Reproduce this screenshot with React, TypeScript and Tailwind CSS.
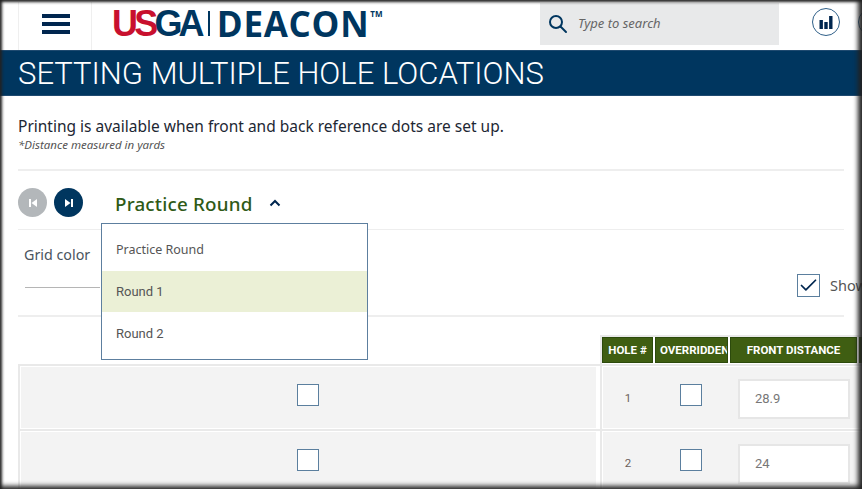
import React from 'react';
import { Check } from 'lucide-react';

const plex = "font-['Noto_Sans',sans-serif]";
const roboto = "font-['Roboto',sans-serif]";
const headCell = `flex shrink-0 items-center border border-[#2c4a0c] bg-[#3f5e12] pt-[2px] text-[11.5px] font-bold text-white ${roboto}`;

function HoleRow({ hole, value }: { hole: number; value: string }) {
  return (
    <div className="flex h-[65px] shrink-0 border-t-2 border-l-2 border-[#e9e9e9] bg-white">
      <div className="flex w-[577px] shrink-0 items-start justify-center border border-white bg-[#f3f3f3] pr-px pt-[17px]">
        <div className="h-[22px] w-[22px] border border-[#5b7f9e] bg-white" />
      </div>
      <div className="ml-[3px] flex flex-1 border-l-2 border-[#e9e9e9]">
        <div className="flex flex-1 border border-white bg-[#f3f3f3]">
          <div className={`w-[50px] shrink-0 pt-[23px] text-center text-[11.5px] text-[#6b5f5a] ${roboto}`}>{hole}</div>
          <div className="flex w-[75px] shrink-0 justify-center pt-[17px]">
            <div className="h-[22px] w-[22px] border border-[#5b7f9e] bg-white" />
          </div>
          <div className="pl-[10px] pt-[12px]">
            <div className={`flex h-[40px] w-[112px] items-center border-2 border-[#e6e6e6] bg-white pl-[15px] text-[13px] text-[#777] ${roboto}`}>{value}</div>
          </div>
        </div>
      </div>
    </div>
  );
}

export default function App() {
  return (
    <div className="relative h-[489px] w-[862px] overflow-hidden bg-white">
      {/* top bar */}
      <header className="flex h-[50px] w-[900px] items-stretch pt-[2px]">
        <div className="ml-[18px] flex w-[74px] shrink-0 items-center justify-center border-x border-[#efefef]">
          <div className="flex w-[29px] flex-col gap-[4px] pb-[5px] pl-px">
            <span className="h-[4px] bg-[#00264f]" />
            <span className="h-[4px] bg-[#00264f]" />
            <span className="h-[4px] bg-[#00264f]" />
          </div>
        </div>
        <div className="ml-[20px] flex w-[428px] shrink-0 items-start pt-[5px]">
          <span className="font-['Liberation_Sans',sans-serif] text-[36px] font-bold leading-[34px] tracking-[-3.8px]">
            <span className="text-[#c8102e]">US</span>
            <span className="text-[#00365f]">GA</span>
          </span>
          <span className="ml-[7px] mt-[4px] h-[25px] w-[2px] bg-[#00365f]" />
          <span className="ml-[7px] font-['Open_Sans',sans-serif] text-[35px] font-bold leading-[34px] tracking-[0.7px] text-[#00365f]">DEACON</span>
          <span className="ml-px mt-[1px] font-['Open_Sans',sans-serif] text-[8px] font-bold leading-[12px] text-[#00365f]">TM</span>
        </div>
        <div className="mb-[5px] mt-[1px] flex w-[239px] shrink-0 items-center bg-[#e8e9ea] pl-[8px]">
          <svg width="20" height="20" viewBox="0 0 20 20" fill="none" stroke="#00365f" strokeWidth="2">
            <circle cx="8" cy="8" r="6" />
            <path d="M12.5 12.5 18 18" strokeLinecap="round" />
          </svg>
          <span className={`ml-[10px] text-[13px] italic text-[#666] ${plex}`}>Type to search</span>
        </div>
        <div className="ml-[33px] mt-[6px] flex h-[28px] w-[28px] shrink-0 items-center justify-center rounded-full border border-[#2f5f88]">
          <svg width="14" height="14" viewBox="0 0 14 14" fill="#00264f">
            <rect x="0.5" y="5" width="3.4" height="9" />
            <rect x="5.3" y="7" width="3.4" height="7" />
            <rect x="10.1" y="1" width="3.4" height="13" />
          </svg>
        </div>
        <div className="ml-[18px] mt-[6px] h-[28px] w-[28px] shrink-0 rounded-full border border-[#2f5f88]" />
      </header>

      {/* title */}
      <div className="flex h-[46px] items-center border-y border-[#1f4a70] bg-[#00365f] pl-[18px]">
        <h1 className={`text-[31px] font-light leading-none text-white ${roboto}`}>SETTING MULTIPLE HOLE LOCATIONS</h1>
      </div>

      <div className="px-[18px]">
        <div className="h-[75px] border-b-2 border-[#eeeeee] pt-[20px]">
          <p className={`text-[15.5px] leading-[21px] text-[#1d2733] ${plex}`}>Printing is available when front and back reference dots are set up.</p>
          <p className={`text-[11.5px] italic leading-[15px] text-[#555] ${plex}`}>*Distance measured in yards</p>
        </div>

        {/* round navigation */}
        <div className="flex h-[59px] items-center border-b border-[#eeeeee] pt-[5px]">
          <div className="flex h-[29px] w-[29px] shrink-0 items-center justify-center rounded-full bg-[#b3b7ba]">
            <svg width="10" height="10" viewBox="0 0 10 10" fill="white">
              <rect x="1" y="1" width="2" height="8" />
              <path d="M9 1v8L3.5 5z" />
            </svg>
          </div>
          <div className="ml-[7px] flex h-[29px] w-[29px] shrink-0 items-center justify-center rounded-full bg-[#00365f]">
            <svg width="10" height="10" viewBox="0 0 10 10" fill="white">
              <path d="M1 1v8l5.5-4z" />
              <rect x="7" y="1" width="2" height="8" />
            </svg>
          </div>
          <span className={`ml-[32px] mt-[3px] text-[18.8px] font-medium tracking-[0.2px] text-[#2f5a17] ${plex}`}>Practice Round</span>
          <svg className="ml-[17px]" width="12" height="8" viewBox="0 0 12 8" fill="none" stroke="#00264f" strokeWidth="2">
            <path d="M1.5 6.5 6 2l4.5 4.5" />
          </svg>
        </div>

        {/* grid settings */}
        <div className="flex h-[87px] border-b-2 border-[#eeeeee] pl-[6px]">
          <div className="w-[76px] shrink-0">
            <div className={`mt-[15px] text-[14.3px] leading-[20px] text-[#4b5560] ${plex}`}>Grid color</div>
            <div className="ml-px mt-[22px] h-px bg-[#b5b5b5]" />
          </div>
          <div className="ml-auto mr-[-18px] flex w-[65px] items-start pt-[44px]">
            <div className="flex h-[23px] w-[23px] shrink-0 items-center justify-center border border-[#5b7f9e]">
              <Check size={21} strokeWidth={2} color="#00264f" />
            </div>
            <span className={`ml-[10px] text-[14.5px] leading-[22px] text-[#555] ${plex}`}>Show</span>
          </div>
        </div>

        {/* holes table */}
        <div className="mt-[18px] mr-[-18px]">
          <div className="ml-[582px] flex h-[29px] items-stretch gap-[2px] border-t-2 border-l-2 border-[#e9e9e9] pb-px">
            <div className={`${headCell} w-[51px] justify-center`}>HOLE #</div>
            <div className={`${headCell} w-[73px] overflow-hidden pl-[4px]`}>OVERRIDDEN</div>
            <div className={`${headCell} w-[127px] justify-center`}>FRONT DISTANCE</div>
            <div className="w-[10px] shrink-0 bg-[#3f5e12]" />
          </div>
          <HoleRow hole={1} value="28.9" />
          <HoleRow hole={2} value="24" />
        </div>
      </div>

      {/* round dropdown */}
      <div className="absolute left-[101px] top-[223px] w-[267px] border border-[#5d7f9f] bg-white py-[6px] text-[#555]">
        <div className={`flex h-[41px] items-center pl-[14px] text-[12.5px] ${plex}`}>Practice Round</div>
        <div className={`flex h-[41px] items-center bg-[#ebf0d6] pl-[14px] text-[13px] ${roboto}`}>Round 1</div>
        <div className={`flex h-[41px] items-center pl-[14px] pt-[2px] text-[13px] ${roboto}`}>Round 2</div>
      </div>

      {/* dark edge of the captured window */}
      <div className="pointer-events-none absolute inset-0 shadow-[inset_2px_2px_3px_#222,inset_-4px_-3px_5px_#222]" />
    </div>
  );
}
